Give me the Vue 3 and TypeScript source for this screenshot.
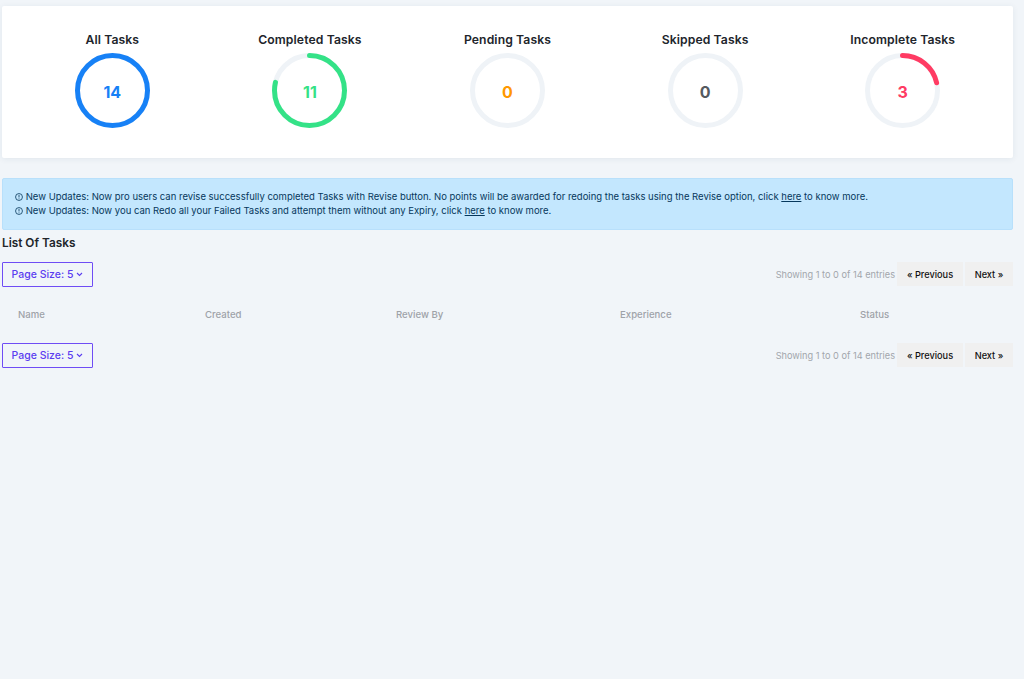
<script setup lang="ts">
interface Stat { label: string; value: number; color: string; pct: number }
const stats: Stat[] = [
  { label: 'All Tasks', value: 14, color: '#1781f6', pct: 100 },
  { label: 'Completed Tasks', value: 11, color: '#34e287', pct: 78.6 },
  { label: 'Pending Tasks', value: 0, color: '#ff9800', pct: 0 },
  { label: 'Skipped Tasks', value: 0, color: '#555a60', pct: 0 },
  { label: 'Incomplete Tasks', value: 3, color: '#ff3b63', pct: 21.4 },
]
const r = 35
const circ = 2 * Math.PI * r
const columns = ['Name', 'Created', 'Review By', 'Experience', 'Status']
const dash = (p: number) => `${(p / 100) * circ} ${circ}`
</script>

<template>
  <div class="page">
    <section class="card">
      <div v-for="s in stats" :key="s.label" class="stat">
        <div class="stat-label">{{ s.label }}</div>
        <div class="ring">
          <svg width="75" height="75" viewBox="0 0 75 75">
            <circle cx="37.5" cy="37.5" :r="r" fill="none" stroke="#eff3f7" stroke-width="5" />
            <circle
              v-if="s.pct > 0"
              cx="37.5"
              cy="37.5"
              :r="r"
              fill="none"
              :stroke="s.color"
              stroke-width="5"
              :stroke-linecap="s.pct < 100 ? 'round' : 'butt'"
              :stroke-dasharray="dash(s.pct)"
              transform="rotate(-90 37.5 37.5)"
            />
          </svg>
          <span class="ring-value" :style="{ color: s.color }">{{ s.value }}</span>
        </div>
      </div>
    </section>

    <section class="alert">
      <div class="alert-line">
        <svg class="info" width="8" height="8" viewBox="0 0 10 10"><circle cx="5" cy="5" r="4.3" fill="none" stroke="currentColor" stroke-width="1" /><path d="M5 2.4v3.2M5 6.8v.9" stroke="currentColor" stroke-width="1" fill="none" /></svg>
        New Updates: Now pro users can revise successfully completed Tasks with Revise button. No points will be awarded for redoing the tasks using the Revise option, click <a href="#">here</a> to know more.
      </div>
      <div class="alert-line">
        <svg class="info" width="8" height="8" viewBox="0 0 10 10"><circle cx="5" cy="5" r="4.3" fill="none" stroke="currentColor" stroke-width="1" /><path d="M5 2.4v3.2M5 6.8v.9" stroke="currentColor" stroke-width="1" fill="none" /></svg>
        New Updates: Now you can Redo all your Failed Tasks and attempt them without any Expiry, click <a href="#">here</a> to know more.
      </div>
    </section>

    <h2 class="title">List Of Tasks</h2>

    <div class="toolbar">
      <button class="size-btn">Page Size: 5
        <svg width="7" height="5" viewBox="0 0 7 5"><path d="M1 1l2.5 2.5L6 1" fill="none" stroke="currentColor" stroke-width="1.1" /></svg>
      </button>
      <div class="pager">
        <span class="entries">Showing 1 to 0 of 14 entries</span>
        <button class="page-btn prev">« Previous</button>
        <button class="page-btn next">Next »</button>
      </div>
    </div>

    <div class="table-head">
      <span v-for="c in columns" :key="c">{{ c }}</span>
    </div>

    <div class="toolbar">
      <button class="size-btn">Page Size: 5
        <svg width="7" height="5" viewBox="0 0 7 5"><path d="M1 1l2.5 2.5L6 1" fill="none" stroke="currentColor" stroke-width="1.1" /></svg>
      </button>
      <div class="pager">
        <span class="entries">Showing 1 to 0 of 14 entries</span>
        <button class="page-btn prev">« Previous</button>
        <button class="page-btn next">Next »</button>
      </div>
    </div>
  </div>
</template>

<style>
html, body { margin: 0; background: #f1f5f9; }
</style>

<style scoped>
.page {
  box-sizing: border-box;
  width: 1024px;
  height: 679px;
  padding: 6px 11px 0 2px;
  background: #f1f5f9;
  font-family: Inter, "Noto Sans", sans-serif;
  overflow: hidden;
}
.card {
  display: grid;
  grid-template-columns: repeat(5, 197.6px);
  justify-content: center;
  height: 151.5px;
  box-sizing: border-box;
  padding-top: 26px;
  background: #fff;
  border-radius: 2px;
  box-shadow: 0 1px 6px rgba(40, 60, 90, 0.08);
}
.stat { display: flex; flex-direction: column; align-items: center; }
.stat-label {
  font-size: 12.2px;
  line-height: 16px;
  font-weight: 600;
  color: #21252b;
  margin-bottom: 5px;
  letter-spacing: 0.1px;
}
.ring { position: relative; width: 75px; height: 75px; }
.ring svg { display: block; }
.ring-value {
  position: absolute;
  inset: 0;
  display: flex;
  align-items: center;
  justify-content: center;
  padding-top: 2px;
  box-sizing: border-box;
  font-size: 16px;
  font-weight: 700;
}
.alert {
  margin-top: 20px;
  height: 52px;
  box-sizing: border-box;
  padding: 11px 12px 0;
  background: #c3e7fe;
  border: 1px solid #b8e0fb;
  border-radius: 2px;
  color: #06385c;
  font-size: 9.5px;
  line-height: 14px;
}
.alert-line { white-space: nowrap; }
.alert-line a { color: #06385c; text-decoration: underline; }
.info { vertical-align: -1px; }
.title {
  margin: 5.5px 0 0;
  font-size: 11.8px;
  line-height: 16px;
  font-weight: 600;
  color: #21252b;
}
.toolbar {
  display: flex;
  justify-content: space-between;
  align-items: flex-start;
  margin-top: 11px;
  height: 25px;
}
.table-head + .toolbar { margin-top: 0; }
.size-btn {
  display: flex;
  align-items: center;
  justify-content: center;
  gap: 3px;
  width: 91px;
  height: 25px;
  padding: 0;
  box-sizing: border-box;
  background: transparent;
  border: 1px solid #6f4cf5;
  border-radius: 1px;
  color: #5b3df0;
  font: 500 10.5px Inter, sans-serif;
}
.pager { display: flex; align-items: center; }
.entries { font-size: 9.2px; color: #a2a6ac; margin-right: 2px; }
.page-btn {
  height: 24px;
  padding: 0;
  border: 0;
  background: #f0f0f0;
  color: #111;
  font: 500 9.2px Inter, sans-serif;
}
.prev { width: 66px; margin-right: 2px; }
.next { width: 48px; }
.table-head {
  display: grid;
  grid-template-columns: 187px 191px 224px 240px 1fr;
  padding-left: 16px;
  height: 56px;
  padding-bottom: 2px;
  box-sizing: border-box;
  align-items: center;
  font-size: 9.6px;
  font-weight: 500;
  color: #9ea2a8;
}
</style>
